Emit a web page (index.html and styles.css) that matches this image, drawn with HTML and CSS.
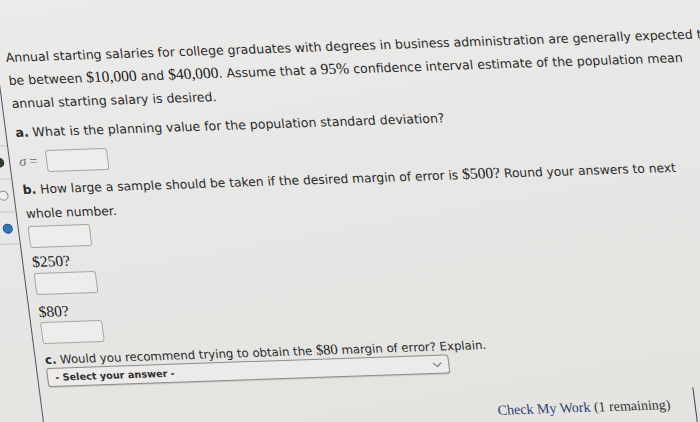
FILE: index.html
```html
<!DOCTYPE html>
<html lang="en">
<head>
<meta charset="utf-8">
<title>Sample size question</title>
<link rel="stylesheet" href="styles.css">
</head>
<body>
<div class="screen">
  <aside class="qnav">
    <div class="qrow"><span class="dot dot-done"></span></div>
    <div class="qrow"><span class="dot dot-open"></span></div>
    <div class="qrow"><span class="dot dot-current"></span></div>
  </aside>
  <main class="question">
    <p class="intro">Annual starting salaries for college graduates with degrees in business administration are generally expected to<br>be between <span class="m">$10,000</span> and <span class="m">$40,000</span>. Assume that a <span class="m">95%</span> confidence interval estimate of the population mean<br>annual starting salary is desired.</p>
    <p class="part part-a"><b>a.</b> What is the planning value for the population standard deviation?</p>
    <div class="sigma-row">
      <span class="sigma"><i>σ</i> =</span>
      <span class="answer-box"></span>
    </div>
    <p class="part part-b"><b>b.</b> How large a sample should be taken if the desired margin of error is <span class="m">$500?</span> Round your answers to next<br>whole number.</p>
    <span class="answer-box"></span>
    <div class="sub sub-250"><span class="m">$250?</span></div>
    <span class="answer-box box-250"></span>
    <div class="sub sub-80"><span class="m">$80?</span></div>
    <span class="answer-box"></span>
    <p class="part part-c"><b>c.</b> Would you recommend trying to obtain the <span class="m">$80</span> margin of error? Explain.</p>
    <div class="select">
      <span class="select-label">- Select your answer -</span>
      <svg class="chevron" width="10" height="6" viewBox="0 0 10 6"><polyline points="1,1 5,5 9,1" fill="none" stroke="#7a7a7a" stroke-width="1.2"/></svg>
    </div>
    <div class="footer">
      <span class="check">Check My Work</span>&nbsp;<span class="remaining">(1 remaining)</span>
    </div>
  </main>
</div>
</body>
</html>
```

FILE: styles.css
```css
html, body {
  margin: 0;
  padding: 0;
}
body {
  width: 700px;
  height: 422px;
  overflow: hidden;
  background: linear-gradient(170deg, #ecebea 0%, #e6e6e4 55%, #e3e3e0 100%);
  font-family: "DejaVu Sans", Verdana, sans-serif;
  color: #2b2b2b;
}
.screen {
  display: flex;
  width: 820px;
  height: 520px;
  transform-origin: 0 0;
  transform: matrix(1, -0.034, 0.13, 1, -32, 0);
}
.qnav {
  width: 20px;
  flex: none;
  border-right: 1.5px solid #4d5367;
  padding-top: 146px;
  box-sizing: content-box;
}
.qrow {
  height: 33px;
  border-top: 1px solid #c8c8c5;
  display: flex;
  align-items: center;
  justify-content: center;
  box-sizing: border-box;
}
.qrow:last-child {
  border-bottom: 1px solid #c8c8c5;
}
.dot {
  width: 10px;
  height: 10px;
  border-radius: 50%;
  box-sizing: border-box;
}
.dot-done { background: #2e3a2c; }
.dot-open { border: 1.5px solid #8d8d8b; background: #efefed; }
.dot-current { background: #2878c2; border: 1px solid #1d4f80; }

.question {
  padding: 47px 0 0 9px;
  font-size: 12.5px;
  line-height: 22px;
  display: flex;
  flex-direction: column;
  align-items: flex-start;
}
.question p { margin: 0; white-space: nowrap; }
.m {
  font-family: "Liberation Serif", "Times New Roman", serif;
  font-size: 15.5px;
  line-height: 1;
  color: #1c1c1c;
}
.question .intro { line-height: 23px; }
.part b { font-weight: bold; }
.question .part-a { margin-top: 7px; }
.sigma-row {
  display: flex;
  align-items: center;
  gap: 9px;
  margin-top: 7px;
}
.sigma {
  font-family: "Liberation Serif", serif;
  font-size: 14px;
  color: #6f6f6f;
  line-height: 1;
}
.answer-box {
  display: block;
  width: 62px;
  height: 22px;
  box-sizing: border-box;
  border: 1.5px solid #a6a6a3;
  border-radius: 3px;
  background: #ededeb;
}
.question .part-b { margin-top: 5px; line-height: 24px; font-size: 12.25px; }
.sub { line-height: 18px; }
.sub-250 { margin-top: 6px; }
.box-250 { margin-top: 1px; }
.sub-80 { margin-top: 9px; }
.question .part-c { margin-top: 8px; line-height: 16px; font-size: 11.7px; }
.part-c .m { font-size: 14.5px; }
.select {
  width: 402px;
  height: 19px;
  box-sizing: border-box;
  border: 1px solid #8c8c8a;
  border-radius: 3px;
  background: #ecebea;
  box-shadow: 0 1px 1px rgba(0,0,0,0.12);
  display: flex;
  align-items: center;
  justify-content: space-between;
  padding: 0 6px 0 7px;
}
.select-label {
  font-size: 9.7px;
  font-weight: bold;
  color: #2f2f2f;
  line-height: 1;
}
.footer {
  margin-top: 22px;
  width: 642px;
  height: 60px;
  box-sizing: border-box;
  border-right: 1.5px solid #3b4058;
  padding: 8px 24px 0 0;
  display: flex;
  justify-content: flex-end;
  align-items: flex-start;
  line-height: 18px;
  font-family: "Liberation Serif", "Times New Roman", serif;
  font-size: 14px;
}
.check { color: #2c3f70; }
.remaining { color: #333; }
```
